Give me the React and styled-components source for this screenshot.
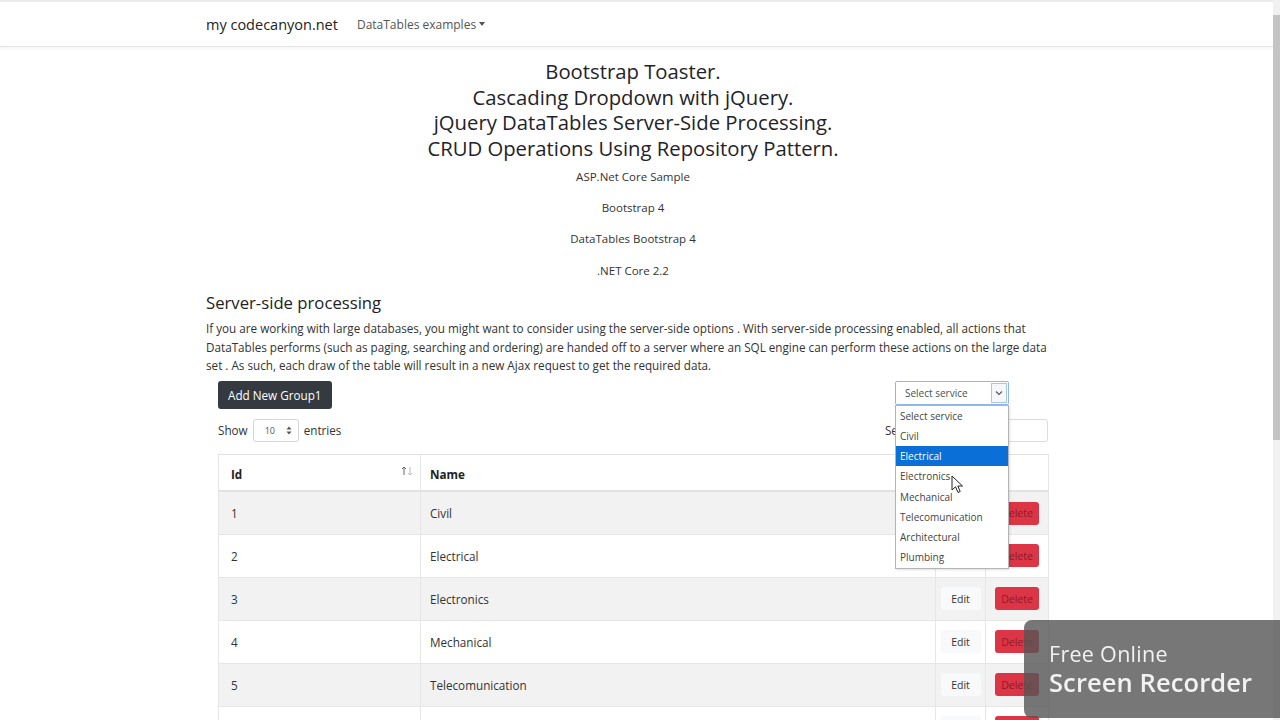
import React from "react";
import styled, { createGlobalStyle } from "styled-components";

const rows = [
  { id: 1, name: "Civil" },
  { id: 2, name: "Electrical" },
  { id: 3, name: "Electronics" },
  { id: 4, name: "Mechanical" },
  { id: 5, name: "Telecomunication" },
  { id: 6, name: "Architectural" },
  { id: 7, name: "Plumbing" },
];

const services = [
  "Select service",
  "Civil",
  "Electrical",
  "Electronics",
  "Mechanical",
  "Telecomunication",
  "Architectural",
  "Plumbing",
];

function App() {
  return (
    <Page>
      <GlobalStyle />
      <Navbar>
        <Brand>my codecanyon.net</Brand>
        <NavLink>
          DataTables examples <Caret />
        </NavLink>
      </Navbar>
      <Main>
        <Heading>
          Bootstrap Toaster.
          <br />
          Cascading Dropdown with jQuery.
          <br />
          jQuery DataTables Server-Side Processing.
          <br />
          CRUD Operations Using Repository Pattern.
        </Heading>
        <Centered>ASP.Net Core Sample</Centered>
        <Centered>Bootstrap 4</Centered>
        <Centered>DataTables Bootstrap 4</Centered>
        <Centered>.NET Core 2.2</Centered>
        <SubTitle>Server-side processing</SubTitle>
        <Text>
          If you are working with large databases, you might want to consider
          using the server-side options . With server-side processing enabled,
          all actions that DataTables performs (such as paging, searching and
          ordering) are handed off to a server where an SQL engine can perform
          these actions on the large data set . As such, each draw of the table
          will result in a new Ajax request to get the required data.
        </Text>
        <Inner>
          <Toolbar>
            <DarkButton>Add New Group1</DarkButton>
            <ServiceWrap>
              <ServiceSelect>
                <span>Select service</span>
                <ArrowBox>
                  <svg width="8" height="6" viewBox="0 0 8 6">
                    <path d="M1 1.5 L4 4.5 L7 1.5" fill="none" stroke="#555" strokeWidth="1.1" />
                  </svg>
                </ArrowBox>
              </ServiceSelect>
              <OptionList>
                {services.map((s) => (
                  <OptionItem key={s} $active={s === "Electrical"}>
                    {s}
                  </OptionItem>
                ))}
              </OptionList>
              <Cursor width="14" height="20" viewBox="0 0 14 20">
                <path
                  d="M1 1 L1 15 L4.5 11.8 L7 17.5 L9.2 16.5 L6.8 11 L11.5 11 Z"
                  fill="#fff"
                  stroke="#222"
                  strokeWidth="1"
                  strokeLinejoin="round"
                />
              </Cursor>
            </ServiceWrap>
          </Toolbar>
          <LengthRow>
            <Label>
              Show
              <SmallSelect>
                10
                <svg width="6" height="9" viewBox="0 0 6 9">
                  <path d="M3 0.5 L5.5 3.5 L0.5 3.5 Z M3 8.5 L5.5 5.5 L0.5 5.5 Z" fill="#555" />
                </svg>
              </SmallSelect>
              entries
            </Label>
            <Label>
              Search:
              <SearchInput />
            </Label>
          </LengthRow>
          <Table>
            <colgroup>
              <col style={{ width: 202 }} />
              <col style={{ width: 515 }} />
              <col style={{ width: 50 }} />
              <col style={{ width: 63 }} />
            </colgroup>
            <thead>
              <tr>
                <Th>
                  <HeadCell>
                    Id
                    <SortIcon>
                      <svg width="12" height="10" viewBox="0 0 12 10">
                        <path d="M3 9 V1 M1 3 L3 1 L5 3" fill="none" stroke="#666" strokeWidth="1" />
                        <path d="M9 1 V9 M7 7 L9 9 L11 7" fill="none" stroke="#bbb" strokeWidth="1" />
                      </svg>
                    </SortIcon>
                  </HeadCell>
                </Th>
                <Th>Name</Th>
                <Th></Th>
                <Th></Th>
              </tr>
            </thead>
            <tbody>
              {rows.map((r, i) => (
                <Row key={r.id} $striped={i % 2 === 0}>
                  <Td>{r.id}</Td>
                  <Td>{r.name}</Td>
                  <Td $center>
                    <EditButton>Edit</EditButton>
                  </Td>
                  <Td $center>
                    <DeleteButton>Delete</DeleteButton>
                  </Td>
                </Row>
              ))}
            </tbody>
          </Table>
        </Inner>
      </Main>
      <ScrollTrack>
        <ScrollThumb />
      </ScrollTrack>
      <Watermark>
        <WmSmall>Free Online</WmSmall>
        <WmBig>Screen Recorder</WmBig>
      </Watermark>
    </Page>
  );
}

export default App;

const GlobalStyle = createGlobalStyle`
  html {
    scrollbar-width: none;
  }
  body {
    margin: 0;
    background: #fff;
    color: #212529;
    font-family: "Open Sans", "Noto Sans", sans-serif;
  }
  ::-webkit-scrollbar {
    display: none;
  }
`;

const Page = styled.div`
  min-height: 1200px;
`;
const Navbar = styled.nav`
  height: 44px;
  border-top: 2px solid #ececec;
  border-bottom: 1px solid #e4e4e4;
  box-shadow: 0 1px 3px rgba(0, 0, 0, 0.05);
  display: flex;
  align-items: center;
  padding-left: 206px;
  gap: 19px;
`;
const Brand = styled.div`
  font-size: 14.5px;
  color: #222;
`;
const NavLink = styled.div`
  font-size: 12px;
  color: #555;
  display: flex;
  align-items: center;
  gap: 3px;
`;
const Caret = styled.span`
  width: 0;
  height: 0;
  border-left: 3.5px solid transparent;
  border-right: 3.5px solid transparent;
  border-top: 4px solid #555;
`;
const Main = styled.main`
  width: 854px;
  margin-left: 206px;
  padding-top: 12px;
`;
const Heading = styled.h3`
  margin: 0 0 5px;
  text-align: center;
  font-weight: 400;
  font-size: 20.3px;
  line-height: 25.7px;
  color: #1f2328;
`;
const Centered = styled.p`
  margin: 0 0 12.3px;
  text-align: center;
  font-size: 11.5px;
  line-height: 19px;
  color: #333;
`;
const SubTitle = styled.h4`
  margin: 0 0 6px;
  font-weight: 400;
  font-size: 16.7px;
  line-height: 21px;
  color: #222;
`;
const Text = styled.p`
  margin: 0 0 6px;
  font-size: 11.7px;
  line-height: 18.6px;
  color: #333;
`;
const Inner = styled.div`
  padding: 0 12px;
`;
const Toolbar = styled.div`
  display: flex;
  justify-content: space-between;
  align-items: flex-start;
  height: 28px;
`;
const DarkButton = styled.div`
  background: #343a40;
  color: #fff;
  border-radius: 3px;
  height: 28px;
  padding: 0 10px;
  display: flex;
  align-items: center;
  font-size: 11.7px;
`;
const ServiceWrap = styled.div`
  position: relative;
  margin-right: 39px;
  z-index: 5;
`;
const ServiceSelect = styled.div`
  width: 112px;
  height: 22px;
  border: 1px solid #8fb8e6;
  border-radius: 2px;
  display: flex;
  align-items: center;
  justify-content: space-between;
  font-size: 10px;
  color: #495057;
  background: #fff;
  span {
    padding-left: 9px;
  }
`;
const ArrowBox = styled.div`
  width: 14px;
  height: 18px;
  margin-right: 1px;
  border: 1px solid #a9c4e4;
  display: flex;
  align-items: center;
  justify-content: center;
  background: #f4f8fc;
`;
const OptionList = styled.div`
  position: absolute;
  top: 24px;
  left: 0;
  width: 112px;
  background: #fff;
  border: 1px solid #b4b4b4;
  box-shadow: 1px 1px 2px rgba(0, 0, 0, 0.12);
  padding-bottom: 1px;
`;
const OptionItem = styled.div`
  height: 20.2px;
  line-height: 20.2px;
  padding-left: 4px;
  font-size: 10px;
  color: ${(p) => (p.$active ? "#fff" : "#444")};
  background: ${(p) => (p.$active ? "#0a6fd6" : "transparent")};
`;
const Cursor = styled.svg`
  position: absolute;
  left: 56px;
  top: 94px;
`;
const LengthRow = styled.div`
  display: flex;
  justify-content: space-between;
  align-items: center;
  margin-top: 10px;
  height: 23px;
`;
const Label = styled.label`
  display: flex;
  align-items: center;
  gap: 5px;
  font-size: 11.7px;
  color: #333;
`;
const SmallSelect = styled.div`
  width: 46px;
  height: 23px;
  box-sizing: border-box;
  border: 1px solid #d6d6d6;
  border-radius: 3px;
  display: flex;
  align-items: center;
  justify-content: space-between;
  padding: 0 6px 0 11px;
  font-size: 9px;
  color: #555;
`;
const SearchInput = styled.div`
  width: 118px;
  height: 23px;
  box-sizing: border-box;
  border: 1px solid #dcdcdc;
  border-radius: 3px;
`;
const Table = styled.table`
  margin-top: 12px;
  width: 830px;
  border-collapse: collapse;
  table-layout: fixed;
  font-size: 11.7px;
  color: #333;
`;
const Th = styled.th`
  height: 37px;
  box-sizing: border-box;
  text-align: left;
  padding: 2px 10px 0 12px;
  border-top: 1px solid #e2e2e2;
  border-bottom: 2px solid #e2e2e2;
  border-left: 1px solid #e6e6e6;
  border-right: 1px solid #e6e6e6;
  font-weight: 700;
  color: #222;
  &:nth-child(2) {
    padding-left: 9px;
  }
`;
const HeadCell = styled.div`
  display: flex;
  justify-content: space-between;
  align-items: center;
`;
const SortIcon = styled.span`
  display: flex;
  margin-right: -3px;
  margin-top: -5px;
`;
const Row = styled.tr`
  height: 43px;
  background: ${(p) => (p.$striped ? "#f2f2f2" : "#fff")};
`;
const Td = styled.td`
  border-top: 1px solid #e6e6e6;
  border-left: 1px solid #e6e6e6;
  border-right: 1px solid #e6e6e6;
  padding: 0 9px 0 12px;
  text-align: ${(p) => (p.$center ? "center" : "left")};
  &:nth-child(2) {
    padding-left: 9px;
  }
  &:nth-child(3),
  &:nth-child(4) {
    padding: 0;
  }
`;
const EditButton = styled.span`
  display: inline-flex;
  align-items: center;
  justify-content: center;
  width: 40px;
  height: 23px;
  border-radius: 3px;
  background: #f8f9fa;
  font-size: 10.5px;
  color: #333;
`;
const DeleteButton = styled.span`
  display: inline-flex;
  align-items: center;
  justify-content: center;
  width: 44px;
  height: 23px;
  border-radius: 3px;
  background: #dc3545;
  font-size: 10.5px;
  color: #8e1a27;
`;
const ScrollTrack = styled.div`
  position: fixed;
  top: 0;
  right: 0;
  width: 7px;
  height: 720px;
  background: #f1f1f1;
  padding-top: 15px;
  box-sizing: border-box;
  z-index: 8;
`;
const ScrollThumb = styled.div`
  height: 425px;
  background: #c4c4c4;
`;
const Watermark = styled.div`
  position: fixed;
  left: 1024px;
  top: 620px;
  width: 256px;
  height: 98px;
  background: rgba(85, 85, 85, 0.8);
  border-radius: 8px 0 0 8px;
  display: flex;
  flex-direction: column;
  justify-content: center;
  padding-left: 25px;
  box-sizing: border-box;
  color: #f2f2f2;
  font-family: "Open Sans", "Noto Sans", sans-serif;
  z-index: 10;
`;
const WmSmall = styled.div`
  font-size: 21.5px;
  line-height: 26px;
  letter-spacing: 0.3px;
`;
const WmBig = styled.div`
  font-size: 25.5px;
  line-height: 30px;
  font-weight: 600;
  letter-spacing: 0.1px;
  white-space: nowrap;
`;
